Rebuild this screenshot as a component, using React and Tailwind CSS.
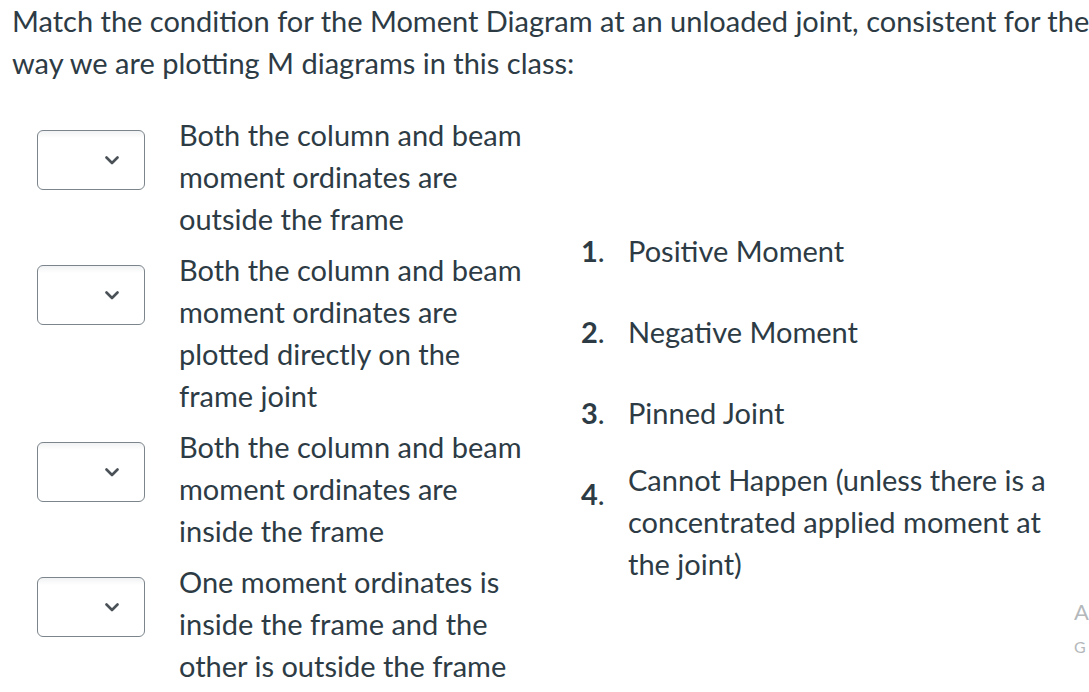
import React from 'react';

const statements = [
    ['Both the column and beam', 'moment ordinates are', 'outside the frame'],
    ['Both the column and beam', 'moment ordinates are', 'plotted directly on the', 'frame joint'],
    ['Both the column and beam', 'moment ordinates are', 'inside the frame'],
    ['One moment ordinates is', 'inside the frame and the', 'other is outside the frame'],
];

const answers = [
    { n: 1, lines: ['Positive Moment'], cls: '' },
    { n: 2, lines: ['Negative Moment'], cls: 'mt-[39px]' },
    { n: 3, lines: ['Pinned Joint'], cls: 'mt-[39px]' },
    { n: 4, lines: ['Cannot Happen (unless there is a', 'concentrated applied moment at', 'the joint)'], cls: 'mt-[25px]', numCls: 'mt-[14px]' },
];

const Select = () => (
    <div className="mt-[16px] ml-[37px] flex h-[60px] w-[108px] shrink-0 items-center justify-end rounded-[6px] border border-[#7c858c] bg-gradient-to-b from-[#f1f2f3] to-white to-[12%] pr-[25px]">
        <svg width="14" height="9" viewBox="0 0 14 9" fill="none">
            <path d="M1.5 1.5L7 7L12.5 1.5" stroke="#4a5157" strokeWidth="2.6" strokeLinecap="round" strokeLinejoin="round" />
        </svg>
    </div>
);

export default () => {
    return (
        <div className="h-[692px] w-[1089px] overflow-hidden bg-white font-['Lato','Noto_Sans',sans-serif] text-[29px] leading-[42px] text-[#2d3b45]">
            <div className="whitespace-nowrap pl-[12px]">
                Match the condition for the Moment Diagram at an unloaded joint, consistent for the
                <br />
                way we are plotting M diagrams in this class:
            </div>
            <div className="flex">
                <div className="flex flex-col gap-[9px] pt-[30px]">
                    {statements.map((lines, i) => (
                        <div key={i} className="flex">
                            <Select />
                            <div className="ml-[34px] w-[360px]">
                                {lines.map((l) => (
                                    <div key={l} className="whitespace-nowrap">{l}</div>
                                ))}
                            </div>
                        </div>
                    ))}
                </div>
                <div className="ml-[42px] flex flex-col pt-[146px]">
                    {answers.map((a) => (
                        <div key={a.n} className={`flex ${a.cls}`}>
                            <div className={`w-[47px] shrink-0 ${a.numCls || ''}`}>
                                <span className="font-bold">{a.n}</span>.
                            </div>
                            <div>
                                {a.lines.map((l) => (
                                    <div key={l} className="whitespace-nowrap">{l}</div>
                                ))}
                            </div>
                        </div>
                    ))}
                </div>
                <div className="ml-auto w-[15px] shrink-0 overflow-hidden whitespace-nowrap pt-[513px] text-[#b4b8bb]">
                    <div className="text-[22px] leading-[30px]">A</div>
                    <div className="mt-[8px] text-[16px] leading-[24px]">G</div>
                </div>
            </div>
        </div>
    );
};
